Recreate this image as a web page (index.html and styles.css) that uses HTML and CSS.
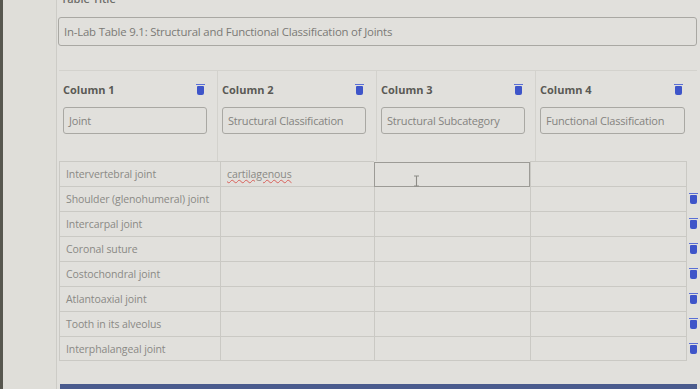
FILE: index.html
```html
<!DOCTYPE html>
<html lang="en">
<head>
  <meta charset="UTF-8">
  <title>In-Lab Table 9.1</title>
  <meta name="viewport" content="width=device-width, initial-scale=1.0"/>
  <link rel="stylesheet" href="styles.css">
</head>
<body>
  <div class="screen">
    <div class="bezel"></div>
    <div class="gutter"></div>
    <div class="editor">
      <div class="field-label">Table Title</div>
      <div class="title-input">In-Lab Table 9.1: Structural and Functional Classification of Joints</div>

      <div class="head-grid">
        <div class="head-cell">
          <div class="head-top"><span class="col-name">Column 1</span><span class="trash"></span></div>
          <div class="head-input">Joint</div>
        </div>
        <div class="head-cell">
          <div class="head-top"><span class="col-name">Column 2</span><span class="trash"></span></div>
          <div class="head-input">Structural Classification</div>
        </div>
        <div class="head-cell">
          <div class="head-top"><span class="col-name">Column 3</span><span class="trash"></span></div>
          <div class="head-input">Structural Subcategory</div>
        </div>
        <div class="head-cell">
          <div class="head-top"><span class="col-name">Column 4</span><span class="trash"></span></div>
          <div class="head-input">Functional Classification</div>
        </div>
      </div>

      <div class="body-grid">
        <div class="cell">Intervertebral joint</div>
        <div class="cell"><span class="misspelt">cartilagenous</span></div>
        <div class="cell focused">
          <svg class="ibeam" width="7" height="12" viewBox="0 0 7 12"><path d="M1 1h5M3.5 1v10M1 11h5" stroke="#8c8b86" stroke-width="1.1" fill="none"/></svg>
        </div>
        <div class="cell"></div>
        <div class="row-tool"></div>

        <div class="cell">Shoulder (glenohumeral) joint</div>
        <div class="cell"></div><div class="cell"></div><div class="cell"></div>
        <div class="row-tool"><span class="trash"></span></div>

        <div class="cell">Intercarpal joint</div>
        <div class="cell"></div><div class="cell"></div><div class="cell"></div>
        <div class="row-tool"><span class="trash"></span></div>

        <div class="cell">Coronal suture</div>
        <div class="cell"></div><div class="cell"></div><div class="cell"></div>
        <div class="row-tool"><span class="trash"></span></div>

        <div class="cell">Costochondral joint</div>
        <div class="cell"></div><div class="cell"></div><div class="cell"></div>
        <div class="row-tool"><span class="trash"></span></div>

        <div class="cell">Atlantoaxial joint</div>
        <div class="cell"></div><div class="cell"></div><div class="cell"></div>
        <div class="row-tool"><span class="trash"></span></div>

        <div class="cell">Tooth in its alveolus</div>
        <div class="cell"></div><div class="cell"></div><div class="cell"></div>
        <div class="row-tool"><span class="trash"></span></div>

        <div class="cell">Interphalangeal joint</div>
        <div class="cell"></div><div class="cell"></div><div class="cell"></div>
        <div class="row-tool"><span class="trash"></span></div>
      </div>

      <div class="bottom-bar"></div>
    </div>
  </div>
</body>
</html>
```

FILE: styles.css
```css
* {
  box-sizing: border-box;
}
html, body {
  margin: 0;
  padding: 0;
  height: 100%;
  overflow: hidden;
}
body {
  background: #e1e0dc;
  font-family: 'Open Sans', 'Liberation Sans', sans-serif;
  color: #858480;
}
.screen {
  display: flex;
  height: 389px;
}
.bezel {
  width: 3px;
  background: #57574f;
}
.gutter {
  width: 56px;
  background: #dfded9;
  border-right: 1px solid #cdccc7;
}
.editor {
  flex: 1;
  display: flex;
  flex-direction: column;
  margin-top: -8px;
  padding: 0 3px 0 1px;
}
.field-label {
  font-size: 11px;
  line-height: 14px;
  font-weight: 600;
  color: #6f6e6a;
  padding-left: 3px;
  margin-bottom: 11px;
}
.title-input {
  height: 29px;
  border: 1px solid #a9a8a3;
  border-radius: 3px;
  font-size: 11.4px;
  line-height: 27px;
  padding-left: 5px;
  color: #7b7a76;
  letter-spacing: -0.2px;
}

/* column headers */
.head-grid {
  margin-top: 24px;
  margin-left: 1px;
  display: grid;
  grid-template-columns: repeat(4, 159px);
  border-top: 1px solid #d3d2cd;
}
.head-cell {
  height: 90px;
  padding: 11px 10px 0 4px;
  border-right: 1px solid #d3d2cd;
}
.head-cell:last-child {
  border-right: none;
}
.head-top {
  display: flex;
  justify-content: space-between;
  align-items: center;
  height: 14px;
  padding-right: 3px;
  margin-bottom: 11px;
}
.col-name {
  font-size: 11px;
  font-weight: 700;
  color: #5a5955;
}
.head-input {
  height: 27px;
  border: 1px solid #a9a8a3;
  border-radius: 3px;
  font-size: 11px;
  line-height: 25px;
  padding-left: 5px;
  color: #84837f;
  white-space: nowrap;
  overflow: hidden;
  letter-spacing: -0.2px;
}

/* joint rows */
.body-grid {
  margin-left: 1px;
  display: grid;
  grid-template-columns: 161px 154px 156px 157px 10px;
  grid-auto-rows: 25px;
}
.cell {
  border-left: 1px solid #cac9c4;
  border-top: 1px solid #cac9c4;
  font-size: 10.5px;
  line-height: 24px;
  padding-left: 6px;
  color: #8a8985;
  white-space: nowrap;
  letter-spacing: -0.1px;
}
.body-grid > .cell:nth-child(5n + 4) {
  border-right: 1px solid #cac9c4;
}
.body-grid > .cell:nth-last-child(-n + 5) {
  border-bottom: 1px solid #cac9c4;
}
.cell.focused {
  border: 1px solid #9c9b96;
  margin: 1px 0 -1px 0;
  position: relative;
}
.ibeam {
  position: absolute;
  left: 38px;
  top: 12px;
}
.misspelt {
  text-decoration: underline wavy #d8605a;
  text-decoration-thickness: 1px;
  text-underline-offset: 1px;
}
.row-tool {
  display: flex;
  align-items: center;
  justify-content: flex-end;
}

/* blue delete button */
.trash {
  display: inline-block;
  width: 7px;
  height: 9px;
  background: #3e55c9;
  border-radius: 1px 1px 2px 2px;
  position: relative;
  top: 1px;
}
.trash::before {
  content: "";
  position: absolute;
  left: -1px;
  top: -2px;
  width: 9px;
  height: 1px;
  background: #5a6fd6;
}

.bottom-bar {
  margin-top: auto;
  margin-left: 2px;
  height: 5px;
  background: #4a5b8d;
}
```
